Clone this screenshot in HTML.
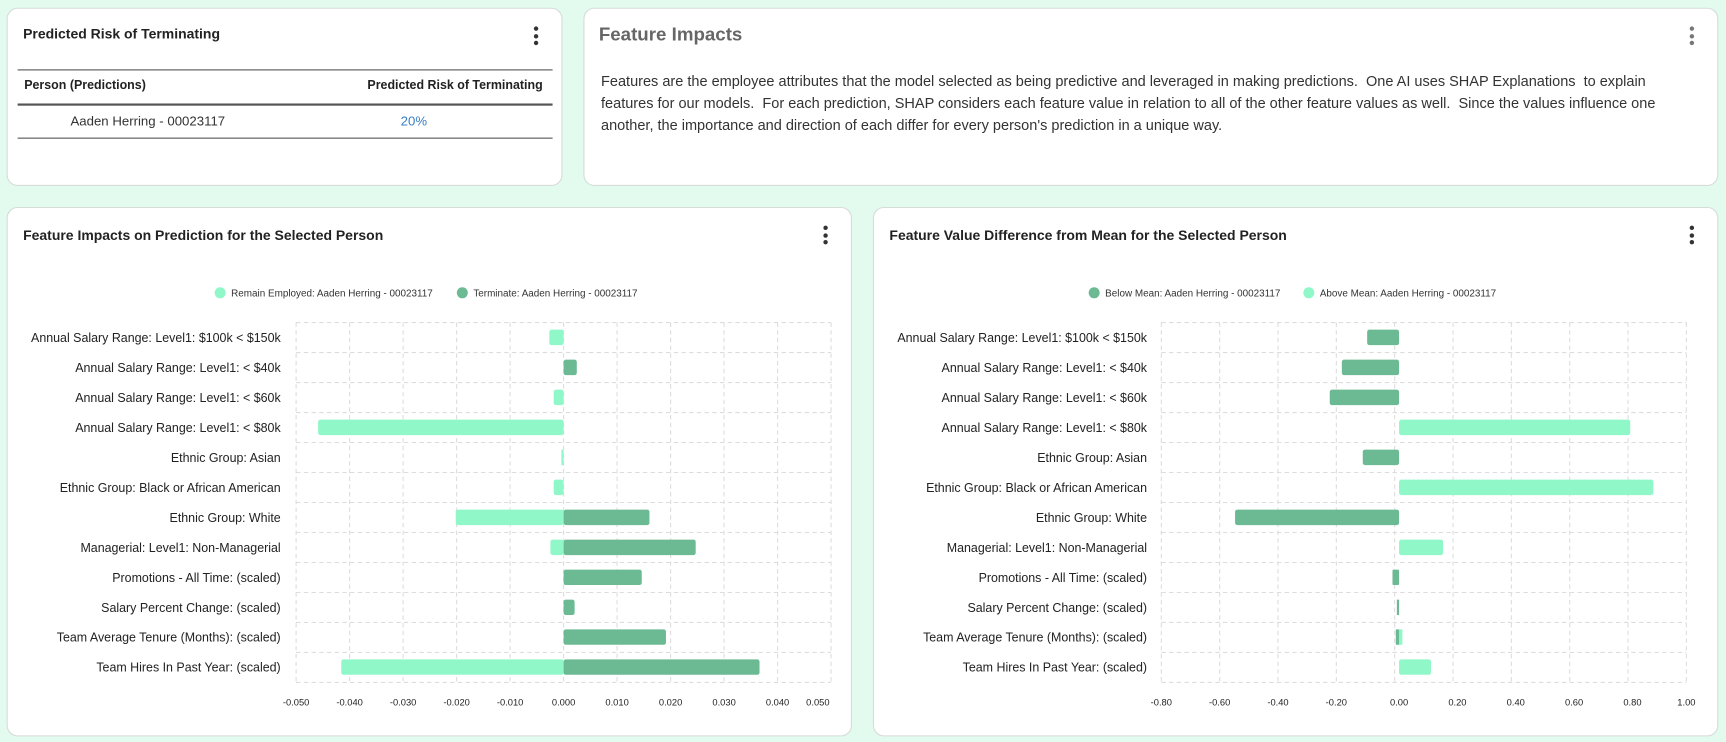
<!DOCTYPE html>
<html><head><meta charset="utf-8"><style>
html,body{margin:0;padding:0;width:1726px;height:742px;overflow:hidden;background:#e2fbee;font-family:"Liberation Sans",sans-serif;}
#w{position:absolute;left:0;top:0;width:1568px;height:674px;transform:scale(1.10077);transform-origin:0 0;}
.card{position:absolute;background:#fff;border:1px solid #d6dcd8;border-radius:10px;box-sizing:border-box;}
.t{position:absolute;font-weight:bold;font-size:12.7px;color:#222;white-space:nowrap;}
.dots{position:absolute;width:4px;}
.dots i{display:block;width:4px;height:4px;border-radius:2px;background:#333;margin-bottom:2.5px;}
.ab{position:absolute;white-space:nowrap;}
</style></head><body><div id="w">

<div class="card" style="left:6px;top:7px;width:505px;height:162px">
 <div class="t" style="left:14px;top:16px">Predicted Risk of Terminating</div>
 <div class="dots" style="left:478px;top:16px"><i></i><i></i><i></i></div>
 <div class="ab" style="left:9px;top:55px;width:486px;border-top:1px solid #555"></div>
 <div class="ab" style="left:15px;top:64px;font-size:11.3px;font-weight:bold;color:#222">Person (Predictions)</div>
 <div class="ab" style="right:17px;top:64px;font-size:11.3px;font-weight:bold;color:#222">Predicted Risk of Terminating</div>
 <div class="ab" style="left:9px;top:86px;width:486px;border-top:2px solid #555"></div>
 <div class="ab" style="left:57px;top:95px;font-size:12px;color:#333">Aaden Herring - 00023117</div>
 <div class="ab" style="left:357px;top:95px;font-size:12px;color:#3a7fc4">20%</div>
 <div class="ab" style="left:9px;top:117px;width:486px;border-top:1px solid #555"></div>
</div>

<div class="card" style="left:530px;top:7px;width:1031px;height:162px">
 <div class="ab" style="left:13px;top:14px;font-size:17px;color:#666;font-weight:bold">Feature Impacts</div>
 <div class="dots" style="left:1004px;top:16px"><i style="background:#777"></i><i style="background:#777"></i><i style="background:#777"></i></div>
 <div class="ab" style="left:15px;top:56px;font-size:13.2px;line-height:20px;color:#333">Features are the employee attributes that the model selected as being predictive and leveraged in making predictions.&nbsp; One AI uses SHAP Explanations &nbsp;to explain<br>features for our models.&nbsp; For each prediction, SHAP considers each feature value in relation to all of the other feature values as well.&nbsp; Since the values influence one<br>another, the importance and direction of each differ for every person's prediction in a unique way.</div>
</div>

<div class="card" style="left:6px;top:188px;width:768px;height:481px">
 <div class="t" style="left:14px;top:18px">Feature Impacts on Prediction for the Selected Person</div>
 <div class="dots" style="left:741px;top:16px"><i></i><i></i><i></i></div>
</div>
<div class="card" style="left:793px;top:188px;width:768px;height:481px">
 <div class="t" style="left:14px;top:18px">Feature Value Difference from Mean for the Selected Person</div>
 <div class="dots" style="left:741px;top:16px"><i></i><i></i><i></i></div>
</div>

<svg style="position:absolute;left:0;top:0" width="1568" height="674" font-family="Liberation Sans, sans-serif">
<g stroke="#ddd" stroke-dasharray="4,3" fill="none">
 <path d="M269 293V620M317.6 293V620M366.2 293V620M414.8 293V620M463.4 293V620M512 293V620M560.6 293V620M609.2 293V620M657.8 293V620M706.4 293V620M755 293V620"/>
 <path d="M269 293H755M269 320.25H755M269 347.5H755M269 374.75H755M269 402H755M269 429.25H755M269 456.5H755M269 483.75H755M269 511H755M269 538.25H755M269 565.5H755M269 592.75H755M269 620H755"/>
 <path d="M1055 293V620M1108 293V620M1161 293V620M1214 293V620M1267 293V620M1320 293V620M1373 293V620M1426 293V620M1479 293V620M1532 293V620"/>
 <path d="M1055 293H1532M1055 320.25H1532M1055 347.5H1532M1055 374.75H1532M1055 402H1532M1055 429.25H1532M1055 456.5H1532M1055 483.75H1532M1055 511H1532M1055 538.25H1532M1055 565.5H1532M1055 592.75H1532M1055 620H1532"/>
</g>
<g font-size="11.3" fill="#222" text-anchor="end">
 <text x="255" y="310.5">Annual Salary Range: Level1: $100k &lt; $150k</text>
 <text x="255" y="337.75">Annual Salary Range: Level1: &lt; $40k</text>
 <text x="255" y="365">Annual Salary Range: Level1: &lt; $60k</text>
 <text x="255" y="392.25">Annual Salary Range: Level1: &lt; $80k</text>
 <text x="255" y="419.5">Ethnic Group: Asian</text>
 <text x="255" y="446.75">Ethnic Group: Black or African American</text>
 <text x="255" y="474">Ethnic Group: White</text>
 <text x="255" y="501.25">Managerial: Level1: Non-Managerial</text>
 <text x="255" y="528.5">Promotions - All Time: (scaled)</text>
 <text x="255" y="555.75">Salary Percent Change: (scaled)</text>
 <text x="255" y="583">Team Average Tenure (Months): (scaled)</text>
 <text x="255" y="610.25">Team Hires In Past Year: (scaled)</text>
</g>
<g font-size="11.3" fill="#222" text-anchor="end">
 <text x="1042" y="310.5">Annual Salary Range: Level1: $100k &lt; $150k</text>
 <text x="1042" y="337.75">Annual Salary Range: Level1: &lt; $40k</text>
 <text x="1042" y="365">Annual Salary Range: Level1: &lt; $60k</text>
 <text x="1042" y="392.25">Annual Salary Range: Level1: &lt; $80k</text>
 <text x="1042" y="419.5">Ethnic Group: Asian</text>
 <text x="1042" y="446.75">Ethnic Group: Black or African American</text>
 <text x="1042" y="474">Ethnic Group: White</text>
 <text x="1042" y="501.25">Managerial: Level1: Non-Managerial</text>
 <text x="1042" y="528.5">Promotions - All Time: (scaled)</text>
 <text x="1042" y="555.75">Salary Percent Change: (scaled)</text>
 <text x="1042" y="583">Team Average Tenure (Months): (scaled)</text>
 <text x="1042" y="610.25">Team Hires In Past Year: (scaled)</text>
</g>
<g font-size="8.5" fill="#222" text-anchor="middle">
 <text x="269" y="641">-0.050</text><text x="317.6" y="641">-0.040</text><text x="366.2" y="641">-0.030</text><text x="414.8" y="641">-0.020</text><text x="463.4" y="641">-0.010</text><text x="512" y="641">0.000</text><text x="560.6" y="641">0.010</text><text x="609.2" y="641">0.020</text><text x="657.8" y="641">0.030</text><text x="706.4" y="641">0.040</text><text x="743" y="641">0.050</text>
 <text x="1055" y="641">-0.80</text><text x="1108" y="641">-0.60</text><text x="1161" y="641">-0.40</text><text x="1214" y="641">-0.20</text><text x="1271" y="641">0.00</text><text x="1324" y="641">0.20</text><text x="1377" y="641">0.40</text><text x="1430" y="641">0.60</text><text x="1483" y="641">0.80</text><text x="1532" y="641">1.00</text>
</g>
<g font-size="9" fill="#333">
 <circle cx="200" cy="266" r="5" fill="#90f8c8"/><text x="210" y="269.5">Remain Employed: Aaden Herring - 00023117</text>
 <circle cx="420" cy="266" r="5" fill="#6cba94"/><text x="430" y="269.5">Terminate: Aaden Herring - 00023117</text>
 <circle cx="994" cy="266" r="5" fill="#6cba94"/><text x="1004" y="269.5">Below Mean: Aaden Herring - 00023117</text>
 <circle cx="1189" cy="266" r="5" fill="#90f8c8"/><text x="1199" y="269.5">Above Mean: Aaden Herring - 00023117</text>
</g>
<g fill="#90f8c8">
 <rect x="499" y="299.5" width="13" height="14" rx="2"/>
 <rect x="503" y="354" width="9" height="14" rx="2"/>
 <rect x="289" y="381.25" width="223" height="14" rx="2"/>
 <rect x="510" y="408.5" width="2" height="14"/>
 <rect x="503" y="435.75" width="9" height="14" rx="2"/>
 <rect x="414" y="463" width="98" height="14" rx="2"/>
 <rect x="500" y="490.25" width="12" height="14" rx="2"/>
 <rect x="310" y="599" width="202" height="14" rx="2"/>
 <rect x="1271" y="381.25" width="210" height="14" rx="2"/>
 <rect x="1271" y="435.75" width="231" height="14" rx="2"/>
 <rect x="1271" y="490.25" width="40" height="14" rx="2"/>
 <rect x="1271" y="571.75" width="3" height="14"/>
 <rect x="1271" y="599" width="29" height="14" rx="2"/>
</g>
<g fill="#6cba94">
 <rect x="512" y="326.75" width="12" height="14" rx="2"/>
 <rect x="512" y="463" width="78" height="14" rx="2"/>
 <rect x="512" y="490.25" width="120" height="14" rx="2"/>
 <rect x="512" y="517.5" width="71" height="14" rx="2"/>
 <rect x="512" y="544.75" width="10" height="14" rx="2"/>
 <rect x="512" y="571.75" width="93" height="14" rx="2"/>
 <rect x="512" y="599" width="178" height="14" rx="2"/>
 <rect x="1242" y="299.5" width="29" height="14" rx="2"/>
 <rect x="1219" y="326.75" width="52" height="14" rx="2"/>
 <rect x="1208" y="354" width="63" height="14" rx="2"/>
 <rect x="1238" y="408.5" width="33" height="14" rx="2"/>
 <rect x="1122" y="463" width="149" height="14" rx="2"/>
 <rect x="1265" y="517.5" width="6" height="14" rx="1"/>
 <rect x="1269" y="544.75" width="2" height="14"/>
 <rect x="1268" y="571.75" width="3" height="14"/>
</g>
</svg>
</div></body></html>
